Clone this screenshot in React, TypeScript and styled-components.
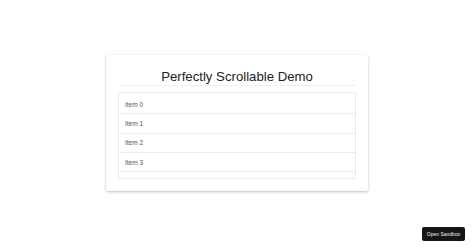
import styled, { createGlobalStyle } from 'styled-components'

const items = [0, 1, 2, 3, 4, 5, 6, 7, 8, 9]

const App = () => {
	return (
		<>
			<GlobalStyle />
			<Page>
				<Card>
					<Title>Perfectly Scrollable Demo</Title>
					<List>
						{items.map(i => (
							<Row key={i}>Item {i}</Row>
						))}
					</List>
				</Card>
			</Page>
			<SandboxButton>Open Sandbox</SandboxButton>
		</>
	)
}

export default App

const GlobalStyle = createGlobalStyle`
	html, body {
		margin: 0;
		padding: 0;
		background: #ffffff;
		font-family: 'Liberation Sans', Arial, sans-serif;
	}
`

const Page = styled.div`
	height: 248px;
	display: flex;
	justify-content: center;
	padding-top: 55px;
	box-sizing: border-box;
`

const Card = styled.div`
	width: 262px;
	height: 136px;
	box-sizing: border-box;
	padding: 0 12px;
	background: #fff;
	border-radius: 2px;
	box-shadow: 0 1px 3px rgba(0, 0, 0, 0.25), 0 0 1px rgba(0, 0, 0, 0.08);
	display: flex;
	flex-direction: column;
`

const Title = styled.h1`
	margin: 0;
	padding-top: 14px;
	height: 31px;
	box-sizing: border-box;
	border-bottom: 1px solid #f0f0f0;
	text-align: center;
	font-size: 13.2px;
	font-weight: 400;
	line-height: 16px;
	color: #222;
`

const List = styled.div`
	margin-top: 6px;
	padding-top: 2px;
	height: 87px;
	box-sizing: border-box;
	overflow: hidden;
	border: 1px solid #ececec;
	border-radius: 2px;
`

const Row = styled.div`
	height: 19.3px;
	box-sizing: border-box;
	padding-left: 6px;
	border-bottom: 1px solid #ececec;
	display: flex;
	align-items: center;
	font-size: 6.5px;
	color: #555;
`

const SandboxButton = styled.div`
	position: fixed;
	right: 9px;
	bottom: 7px;
	width: 43px;
	height: 14px;
	border-radius: 2px;
	background: #151515;
	color: #f2f2f2;
	font-size: 5px;
	display: flex;
	align-items: center;
	justify-content: center;
`
